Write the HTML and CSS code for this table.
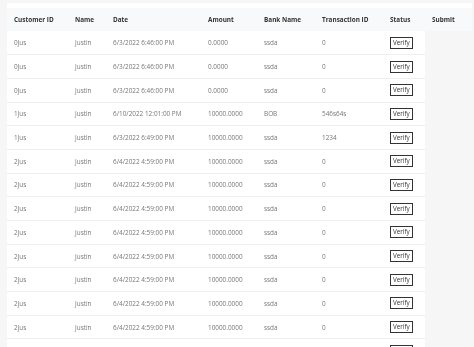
FILE: index.html
```html
<!DOCTYPE html>
<html lang="en">
<head>
    <meta charset="UTF-8">
    <title>Transactions</title>
    <link rel="stylesheet" href="styles.css">
</head>
<body>
    <div class="panel">
        <table class="txn-table">
            <thead>
                <tr>
                    <th class="col-cust">Customer ID</th>
                    <th class="col-name">Name</th>
                    <th class="col-date">Date</th>
                    <th class="col-amount">Amount</th>
                    <th class="col-bank">Bank Name</th>
                    <th class="col-txn">Transaction ID</th>
                    <th class="col-status">Status</th>
                    <th class="col-submit">Submit</th>
                </tr>
            </thead>
            <tbody>
                <tr><td>0Jus</td><td>Justin</td><td>6/3/2022 6:46:00 PM</td><td>0.0000</td><td>ssda</td><td>0</td><td><button class="verify">Verify</button></td></tr>
                <tr><td>0Jus</td><td>Justin</td><td>6/3/2022 6:46:00 PM</td><td>0.0000</td><td>ssda</td><td>0</td><td><button class="verify">Verify</button></td></tr>
                <tr><td>0Jus</td><td>Justin</td><td>6/3/2022 6:46:00 PM</td><td>0.0000</td><td>ssda</td><td>0</td><td><button class="verify">Verify</button></td></tr>
                <tr><td>1Jus</td><td>Justin</td><td>6/10/2022 12:01:00 PM</td><td>10000.0000</td><td>BOB</td><td>546s64s</td><td><button class="verify">Verify</button></td></tr>
                <tr><td>1Jus</td><td>Justin</td><td>6/3/2022 6:49:00 PM</td><td>10000.0000</td><td>ssda</td><td>1234</td><td><button class="verify">Verify</button></td></tr>
                <tr><td>2Jus</td><td>Justin</td><td>6/4/2022 4:59:00 PM</td><td>10000.0000</td><td>ssda</td><td>0</td><td><button class="verify">Verify</button></td></tr>
                <tr><td>2Jus</td><td>Justin</td><td>6/4/2022 4:59:00 PM</td><td>10000.0000</td><td>ssda</td><td>0</td><td><button class="verify">Verify</button></td></tr>
                <tr><td>2Jus</td><td>Justin</td><td>6/4/2022 4:59:00 PM</td><td>10000.0000</td><td>ssda</td><td>0</td><td><button class="verify">Verify</button></td></tr>
                <tr><td>2Jus</td><td>Justin</td><td>6/4/2022 4:59:00 PM</td><td>10000.0000</td><td>ssda</td><td>0</td><td><button class="verify">Verify</button></td></tr>
                <tr><td>2Jus</td><td>Justin</td><td>6/4/2022 4:59:00 PM</td><td>10000.0000</td><td>ssda</td><td>0</td><td><button class="verify">Verify</button></td></tr>
                <tr><td>2Jus</td><td>Justin</td><td>6/4/2022 4:59:00 PM</td><td>10000.0000</td><td>ssda</td><td>0</td><td><button class="verify">Verify</button></td></tr>
                <tr><td>2Jus</td><td>Justin</td><td>6/4/2022 4:59:00 PM</td><td>10000.0000</td><td>ssda</td><td>0</td><td><button class="verify">Verify</button></td></tr>
                <tr><td>2Jus</td><td>Justin</td><td>6/4/2022 4:59:00 PM</td><td>10000.0000</td><td>ssda</td><td>0</td><td><button class="verify">Verify</button></td></tr>
                <tr><td>2Jus</td><td>Justin</td><td>6/4/2022 4:59:00 PM</td><td>10000.0000</td><td>ssda</td><td>0</td><td><button class="verify">Verify</button></td></tr>
                <tr><td>2Jus</td><td>Justin</td><td>6/4/2022 4:59:00 PM</td><td>10000.0000</td><td>ssda</td><td>0</td><td><button class="verify">Verify</button></td></tr>
            </tbody>
        </table>
    </div>
</body>
</html>
```

FILE: styles.css
```css
body {
    margin: 0;
    padding: 0;
    background-color: #f6f6f6;
    font-family: "Open Sans", "Noto Sans", sans-serif;
    color: #777;
    overflow: hidden;
}

.panel {
    margin: 3px 2px 0 7px;
    padding-top: 5px;
    background-color: #fff;
    will-change: transform;
}

.txn-table {
    width: 100%;
    border-collapse: collapse;
    table-layout: fixed;
    background-color: #f6f6f6;
    font-size: 6.4px;
}

.txn-table th,
.txn-table td {
    box-sizing: border-box;
    padding: 0 0 0 7px;
    text-align: left;
    white-space: nowrap;
}

.txn-table th {
    height: 23px;
    font-weight: 700;
    color: #333;
    background-color: #f8f9fa;
}

.txn-table td {
    height: 23.7px;
    background-color: #fff;
    border-bottom: 1px solid #eee;
}

/* 列宽 */
.col-cust { width: 61px; }
.col-name { width: 38px; }
.col-date { width: 95px; }
.col-amount { width: 56px; }
.col-bank { width: 58px; }
.col-txn { width: 68px; }
.col-status { width: 42px; }

.verify {
    font-family: inherit;
    font-size: 6.3px;
    color: #333;
    background-color: #fff;
    border: 1.5px solid #333;
    border-radius: 0;
    padding: 1px 2px;
    line-height: 8px;
}
```
